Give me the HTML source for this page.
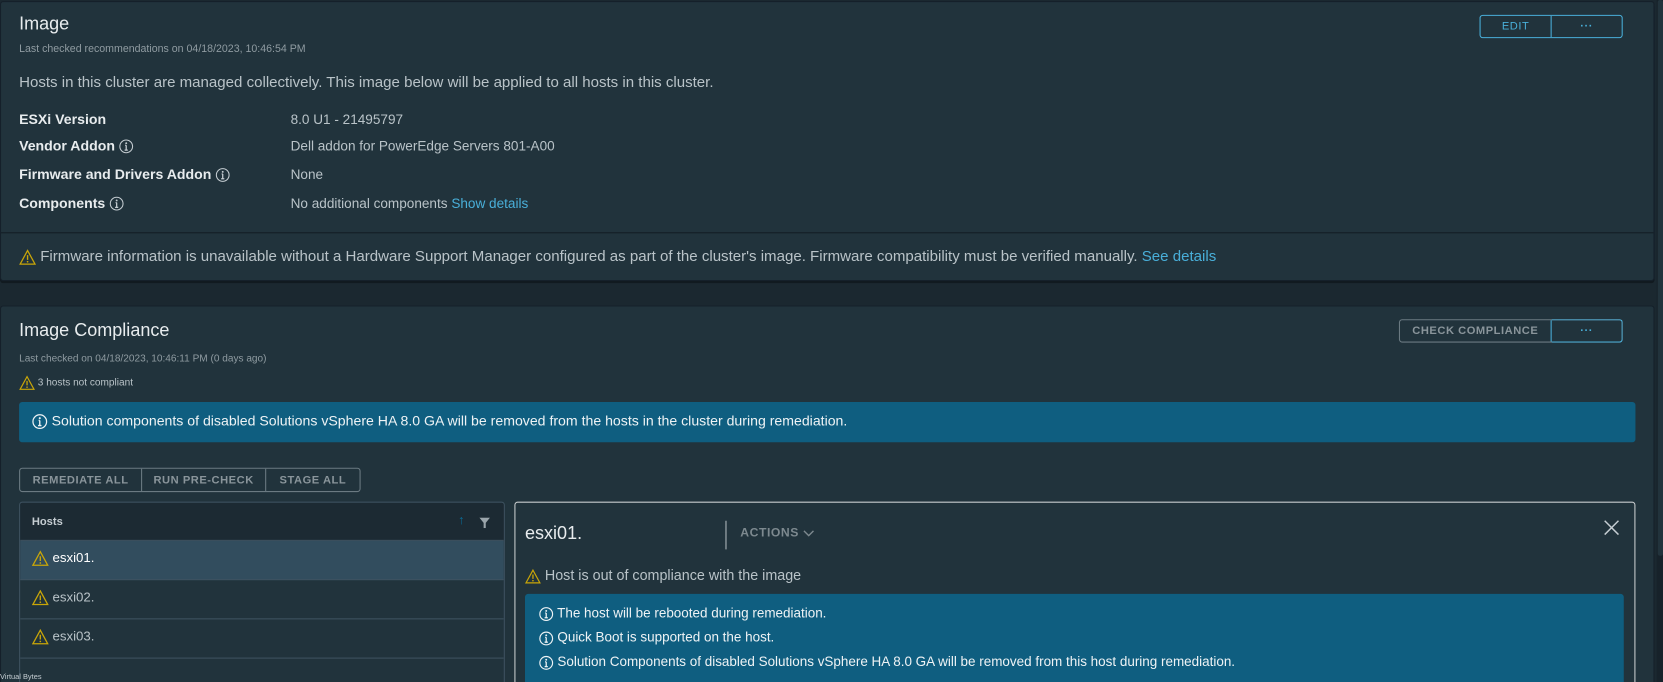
<!DOCTYPE html>
<html><head><meta charset="utf-8"><style>
*{margin:0;padding:0;box-sizing:border-box}
html,body{width:1663px;height:682px;overflow:hidden;background:#1b2830}
#w{position:absolute;left:0;top:0;width:1568px;height:643px;transform:scale(1.0606);transform-origin:0 0;font-family:"Liberation Sans",sans-serif;color:#c5cdd2;overflow:hidden}
.a{position:absolute;white-space:nowrap}
.card{position:absolute;background:#21333c;border:1px solid #15202a;border-radius:3px}
.lbl{font-weight:bold;font-size:13.3px;color:#e8ecee}
.val{font-size:12.8px;color:#b9c3c8}
.link{color:#49afd9}
.btn{position:absolute;border:1px solid #49afd9;border-radius:3px;display:flex;font-size:10.5px;letter-spacing:.5px}
.btn div{display:flex;align-items:center;justify-content:center;height:100%}
svg{display:inline-block;vertical-align:middle}
</style></head><body><div id="w">
<div class="a" style="left:1562px;top:0;width:6px;height:643px;background:#17222a"></div>
<div class="a" style="left:1563px;top:0;width:5px;height:524px;background:#22333c;border-radius:2px"></div>

<div class="card" style="left:0;top:1px;width:1560px;height:264px;box-shadow:0 2px 0 #111a20"></div>
<div class="a" style="left:18px;top:13px;font-size:17px;color:#e8ecee">Image</div>
<div class="a" style="left:18px;top:41px;font-size:10px;color:#8f9ba1">Last checked recommendations on 04/18/2023, 10:46:54 PM</div>
<div class="a" style="left:18px;top:70px;font-size:14.2px;color:#b9c3c8">Hosts in this cluster are managed collectively. This image below will be applied to all hosts in this cluster.</div>

<div class="a lbl" style="left:18px;top:105px">ESXi Version</div>
<div class="a val" style="left:274px;top:105px">8.0 U1 - 21495797</div>
<div class="a lbl" style="left:18px;top:130px">Vendor Addon <svg width="14" height="14" viewBox="0 0 14 14"><circle cx="7" cy="7" r="6" fill="none" stroke="#c5cdd2" stroke-width="1"/><path d="M7 6v4.5M5.5 10.5h3M6 6h1" stroke="#c5cdd2" stroke-width="1.2"/><circle cx="7" cy="4" r=".9" fill="#c5cdd2"/></svg></div>
<div class="a val" style="left:274px;top:130px">Dell addon for PowerEdge Servers 801-A00</div>
<div class="a lbl" style="left:18px;top:157px">Firmware and Drivers Addon <svg width="14" height="14" viewBox="0 0 14 14"><circle cx="7" cy="7" r="6" fill="none" stroke="#c5cdd2" stroke-width="1"/><path d="M7 6v4.5M5.5 10.5h3M6 6h1" stroke="#c5cdd2" stroke-width="1.2"/><circle cx="7" cy="4" r=".9" fill="#c5cdd2"/></svg></div>
<div class="a val" style="left:274px;top:157px">None</div>
<div class="a lbl" style="left:18px;top:184px">Components <svg width="14" height="14" viewBox="0 0 14 14"><circle cx="7" cy="7" r="6" fill="none" stroke="#c5cdd2" stroke-width="1"/><path d="M7 6v4.5M5.5 10.5h3M6 6h1" stroke="#c5cdd2" stroke-width="1.2"/><circle cx="7" cy="4" r=".9" fill="#c5cdd2"/></svg></div>
<div class="a val" style="left:274px;top:184px">No additional components <span class="link">Show details</span></div>

<div class="a" style="left:1px;top:219px;width:1558px;height:1px;background:#131d24"></div>
<div class="a" style="left:18px;top:234px;font-size:14.2px;color:#b9c3c8"><svg width="16" height="15" viewBox="0 0 16 15"><path d="M8 1.2L15 14H1z" fill="none" stroke="#c9a608" stroke-width="1.2"/><path d="M8 5.5v4.5" stroke="#c9a608" stroke-width="1.3"/><circle cx="8" cy="11.8" r=".8" fill="#c9a608"/></svg> Firmware information is unavailable without a Hardware Support Manager configured as part of the cluster's image. Firmware compatibility must be verified manually. <span class="link">See details</span></div>

<div class="btn" style="left:1395px;top:14px;width:135px;height:22px"><div style="width:67px;border-right:1px solid #49afd9;color:#49afd9">EDIT</div><div style="flex:1;color:#49afd9;font-weight:bold">···</div></div>

<div class="card" style="left:0;top:288px;width:1560px;height:360px"></div>
<div class="a" style="left:18px;top:302px;font-size:17px;color:#e8ecee">Image Compliance</div>
<div class="a" style="left:18px;top:333px;font-size:9.5px;color:#8f9ba1">Last checked on 04/18/2023, 10:46:11 PM (0 days ago)</div>
<div class="a" style="left:18px;top:354px;font-size:9.5px;color:#b9c3c8"><svg width="15" height="14" viewBox="0 0 16 15"><path d="M8 1.2L15 14H1z" fill="none" stroke="#c9a608" stroke-width="1.2"/><path d="M8 5.5v4.5" stroke="#c9a608" stroke-width="1.3"/><circle cx="8" cy="11.8" r=".8" fill="#c9a608"/></svg> 3 hosts not compliant</div>
<div class="btn" style="left:1319px;top:301px;width:211px;height:22px;border-color:#6b7a82"><div style="width:143px;border-right:1px solid #49afd9;color:#8a959b;font-weight:bold">CHECK COMPLIANCE</div><div style="flex:1;color:#49afd9;font-weight:bold;border:1px solid #49afd9;margin:-1px -1px -1px 0;height:22px;border-radius:0 3px 3px 0;border-left:none">···</div></div>

<div class="a" style="left:18px;top:379px;width:1524px;height:38px;background:#0f5e80;border-radius:3px"></div>
<div class="a" style="left:30px;top:389px;font-size:13.3px;color:#eef3f5"><svg width="15" height="15" viewBox="0 0 14 14"><circle cx="7" cy="7" r="6" fill="none" stroke="#eef3f5" stroke-width="1.1"/><path d="M7 6v4.5M5.5 10.5h3M6 6h1" stroke="#eef3f5" stroke-width="1.2"/><circle cx="7" cy="4" r=".9" fill="#eef3f5"/></svg> Solution components of disabled Solutions vSphere HA 8.0 GA will be removed from the hosts in the cluster during remediation.</div>

<div class="btn" style="left:18px;top:441px;width:322px;height:23px;border-color:#6b7a82;font-weight:bold;color:#8a959b;font-size:10.5px"><div style="width:115px;border-right:1px solid #6b7a82">REMEDIATE ALL</div><div style="width:117px;border-right:1px solid #6b7a82">RUN PRE-CHECK</div><div style="flex:1">STAGE ALL</div></div>

<div class="a" style="left:18px;top:473px;width:458px;height:180px;border:1px solid #3e5260;border-radius:3px;background:#21333c;overflow:hidden">
 <div style="height:36px;background:#1c2a33;border-bottom:1px solid #3e5260;position:relative"><span class="a" style="left:11px;top:12px;font-size:10.5px;font-weight:bold;color:#c5cdd2">Hosts</span><span class="a" style="left:413px;top:9px;font-size:12px;color:#0a6d99">↑</span><svg class="a" style="left:433px;top:14px" width="10" height="10" viewBox="0 0 10 10"><path d="M0 0h10L6 5v5H4V5z" fill="#9aa5ab"/></svg></div>
 <div style="height:37px;background:#324d5e;border-bottom:1px solid #3e5260;position:relative"><span class="a" style="left:11px;top:9px;font-size:12.5px;color:#fff"><svg width="16" height="15" viewBox="0 0 16 15"><path d="M8 1.2L15 14H1z" fill="none" stroke="#c9a608" stroke-width="1.2"/><path d="M8 5.5v4.5" stroke="#c9a608" stroke-width="1.3"/><circle cx="8" cy="11.8" r=".8" fill="#c9a608"/></svg> esxi01.</span></div>
 <div style="height:37px;border-bottom:1px solid #3e5260;position:relative"><span class="a" style="left:11px;top:9px;font-size:12.5px;color:#b9c3c8"><svg width="16" height="15" viewBox="0 0 16 15"><path d="M8 1.2L15 14H1z" fill="none" stroke="#c9a608" stroke-width="1.2"/><path d="M8 5.5v4.5" stroke="#c9a608" stroke-width="1.3"/><circle cx="8" cy="11.8" r=".8" fill="#c9a608"/></svg> esxi02.</span></div>
 <div style="height:37px;border-bottom:1px solid #3e5260;position:relative"><span class="a" style="left:11px;top:9px;font-size:12.5px;color:#b9c3c8"><svg width="16" height="15" viewBox="0 0 16 15"><path d="M8 1.2L15 14H1z" fill="none" stroke="#c9a608" stroke-width="1.2"/><path d="M8 5.5v4.5" stroke="#c9a608" stroke-width="1.3"/><circle cx="8" cy="11.8" r=".8" fill="#c9a608"/></svg> esxi03.</span></div>
</div>
<div class="a" style="left:0;top:635px;font-size:7px;color:#c5cdd2">Virtual Bytes</div>

<div class="a" style="left:485px;top:473px;width:1057px;height:180px;border:1px solid #c8ccce;border-radius:3px"></div>
<div class="a" style="left:495px;top:493px;font-size:17px;color:#e8ecee">esxi01.</div>
<div class="a" style="left:684px;top:491px;width:1px;height:27px;background:#b0b8bc"></div>
<div class="a" style="left:698px;top:497px;font-size:11.5px;font-weight:bold;color:#7d898f;letter-spacing:.5px">ACTIONS <svg width="11" height="8" viewBox="0 0 11 8"><path d="M1 1.5l4.5 4.5 4.5-4.5" fill="none" stroke="#7d898f" stroke-width="1.3"/></svg></div>
<svg class="a" style="left:1512px;top:490px" width="15" height="15" viewBox="0 0 15 15"><path d="M1 1l13 13M14 1L1 14" stroke="#c5cdd2" stroke-width="1.4"/></svg>
<div class="a" style="left:495px;top:535px;font-size:13.5px;color:#b9c3c8"><svg width="15" height="15" viewBox="0 0 16 15"><path d="M8 1.2L15 14H1z" fill="none" stroke="#c9a608" stroke-width="1.2"/><path d="M8 5.5v4.5" stroke="#c9a608" stroke-width="1.3"/><circle cx="8" cy="11.8" r=".8" fill="#c9a608"/></svg> Host is out of compliance with the image</div>
<div class="a" style="left:495px;top:560px;width:1036px;height:90px;background:#0f5e80;border-radius:3px"></div>
<div class="a" style="left:508px;top:567px;font-size:12.7px;color:#eef3f5;line-height:23px">
<div><svg width="14" height="14" viewBox="0 0 14 14"><circle cx="7" cy="7" r="6" fill="none" stroke="#eef3f5" stroke-width="1.1"/><path d="M7 6v4.5M5.5 10.5h3M6 6h1" stroke="#eef3f5" stroke-width="1.2"/><circle cx="7" cy="4" r=".9" fill="#eef3f5"/></svg> The host will be rebooted during remediation.</div>
<div><svg width="14" height="14" viewBox="0 0 14 14"><circle cx="7" cy="7" r="6" fill="none" stroke="#eef3f5" stroke-width="1.1"/><path d="M7 6v4.5M5.5 10.5h3M6 6h1" stroke="#eef3f5" stroke-width="1.2"/><circle cx="7" cy="4" r=".9" fill="#eef3f5"/></svg> Quick Boot is supported on the host.</div>
<div><svg width="14" height="14" viewBox="0 0 14 14"><circle cx="7" cy="7" r="6" fill="none" stroke="#eef3f5" stroke-width="1.1"/><path d="M7 6v4.5M5.5 10.5h3M6 6h1" stroke="#eef3f5" stroke-width="1.2"/><circle cx="7" cy="4" r=".9" fill="#eef3f5"/></svg> Solution Components of disabled Solutions vSphere HA 8.0 GA will be removed from this host during remediation.</div>
</div>
</div></body></html>
